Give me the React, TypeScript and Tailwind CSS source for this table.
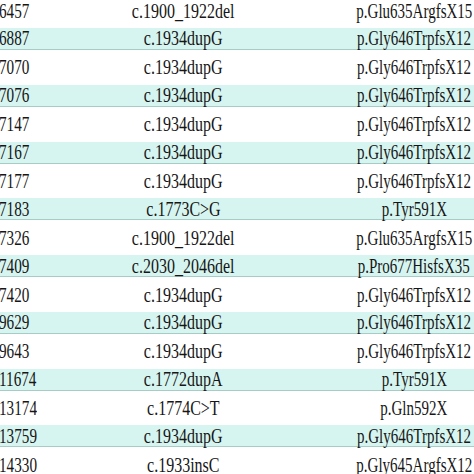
import React from 'react';

const rows: [string, string, string][] = [
  ['6457', 'c.1900_1922del', 'p.Glu635ArgfsX15'],
  ['6887', 'c.1934dupG', 'p.Gly646TrpfsX12'],
  ['7070', 'c.1934dupG', 'p.Gly646TrpfsX12'],
  ['7076', 'c.1934dupG', 'p.Gly646TrpfsX12'],
  ['7147', 'c.1934dupG', 'p.Gly646TrpfsX12'],
  ['7167', 'c.1934dupG', 'p.Gly646TrpfsX12'],
  ['7177', 'c.1934dupG', 'p.Gly646TrpfsX12'],
  ['7183', 'c.1773C>G', 'p.Tyr591X'],
  ['7326', 'c.1900_1922del', 'p.Glu635ArgfsX15'],
  ['7409', 'c.2030_2046del', 'p.Pro677HisfsX35'],
  ['7420', 'c.1934dupG', 'p.Gly646TrpfsX12'],
  ['9629', 'c.1934dupG', 'p.Gly646TrpfsX12'],
  ['9643', 'c.1934dupG', 'p.Gly646TrpfsX12'],
  ['11674', 'c.1772dupA', 'p.Tyr591X'],
  ['13174', 'c.1774C>T', 'p.Gln592X'],
  ['13759', 'c.1934dupG', 'p.Gly646TrpfsX12'],
  ['14330', 'c.1933insC', 'p.Gly645ArgfsX12'],
];

const App: React.FC = () => {
  return (
    <div className="w-[474px] h-[474px] overflow-hidden bg-white text-[#161616] font-['Liberation_Serif','Times_New_Roman',serif] text-[20px] leading-none">
      <div className="mt-[-3.6px]">
        {rows.map(([id, cdna, prot], i) => (
          <div key={id} className="h-[28.4px] py-[3.2px]">
            <div
              className={
                'h-[22px] grid grid-cols-[92px_182px_200px] items-center ' +
                (i % 2 === 1 ? 'bg-[#d6f5f0] border-b border-[#a6ccc6]' : '')
              }
            >
              <div className="flex justify-start whitespace-nowrap ml-[-1px]">
                <span className="inline-block origin-left scale-x-[0.76]">{id}</span>
              </div>
              <div className="flex justify-center whitespace-nowrap">
                <span className="inline-block scale-x-[0.8]">{cdna}</span>
              </div>
              <div className="flex justify-center whitespace-nowrap pl-[80px]">
                <span className="inline-block scale-x-[0.75]">{prot}</span>
              </div>
            </div>
          </div>
        ))}
      </div>
    </div>
  );
};

export default App;
